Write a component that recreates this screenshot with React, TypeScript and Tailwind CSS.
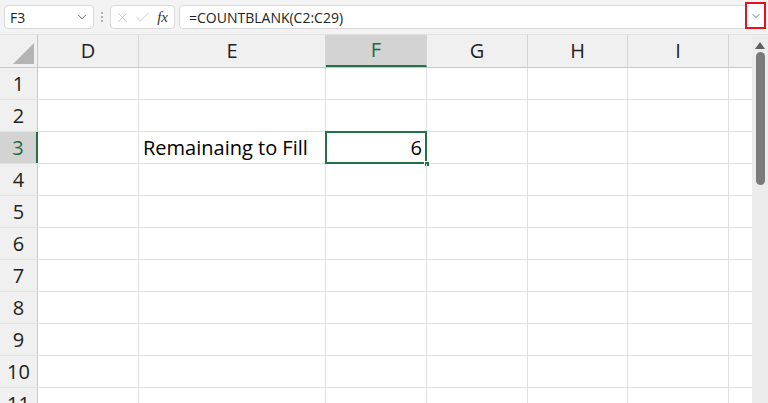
import { ChevronDown, X, Check } from "lucide-react"

const cols = [
    { name: "D", w: "w-[101px]" },
    { name: "E", w: "w-[187px]" },
    { name: "F", w: "w-[101px]" },
    { name: "G", w: "w-[101px]" },
    { name: "H", w: "w-[100px]" },
    { name: "I", w: "w-[101px]" },
]

const rows = [1, 2, 3, 4, 5, 6, 7, 8, 9, 10, 11]

const FormulaBar = () => {
    return (
        <div className="h-[35px] bg-[#f3f3f3] flex items-center pl-[4px] pr-[2px] gap-[4px] border-b border-[#e2e2e2]">
            <div className="w-[90px] h-[24px] bg-white border border-[#d9d9d9] rounded-[4px] flex items-center justify-between pl-[5px] pr-[4px]">
                <span className="text-[14px] text-[#222]">F3</span>
                <ChevronDown size={14} strokeWidth={1.6} className="text-[#555]" />
            </div>
            <div className="w-[8px] flex flex-col items-center gap-[2px]">
                <span className="w-[2px] h-[2px] bg-[#9a9a9a] rounded-full" />
                <span className="w-[2px] h-[2px] bg-[#9a9a9a] rounded-full" />
                <span className="w-[2px] h-[2px] bg-[#9a9a9a] rounded-full" />
            </div>
            <div className="w-[65px] h-[24px] bg-white border border-[#d9d9d9] rounded-[4px] flex items-center px-[3px] gap-[3px]">
                <X size={17} strokeWidth={1.2} className="text-[#c4c4c4]" />
                <Check size={17} strokeWidth={1.2} className="text-[#c4c4c4]" />
                <span className="ml-auto mr-[3px] text-[15px] italic text-[#333]" style={{ fontFamily: '"Liberation Serif", serif' }}>fx</span>
            </div>
            <div className="flex-1 h-[24px] bg-white border border-[#d9d9d9] rounded-[4px] flex items-center pl-[9px] relative">
                <span className="text-[14px] text-[#222]">=COUNTBLANK(C2:C29)</span>
                <div className="absolute right-[-1px] top-[-4px] w-[21px] h-[27px] border-2 border-[#e8101a] flex items-center justify-center bg-white">
                    <ChevronDown size={12} strokeWidth={1.6} className="text-[#555]" />
                </div>
            </div>
        </div>
    )
}

const App = () => {
    return (
        <div className="w-[768px] h-[403px] overflow-hidden flex flex-col bg-white" style={{ fontFamily: '"Open Sans", "Liberation Sans", sans-serif' }}>
            <FormulaBar />
            <div className="flex flex-1 min-h-0">
                <div className="w-[752px] flex flex-col">
                    {/* column headers */}
                    <div className="h-[33px] shrink-0 flex bg-[#f0f0f0] border-b border-[#c8c8c8]">
                        <div className="w-[38px] border-r border-[#c8c8c8] flex items-end justify-end pr-[3px] pb-[3px]">
                            <div className="w-0 h-0 border-l-[21px] border-l-transparent border-b-[21px] border-b-[#b4b4b4]" />
                        </div>
                        {cols.map((c) => (
                            <div
                                key={c.name}
                                className={`${c.w} flex items-center justify-center text-[20px] border-r border-[#d4d4d4] ${c.name === "F" ? "bg-[#d3d3d3] text-[#1d6b40] border-b-2 border-b-[#217346]" : "text-[#222]"}`}
                            >
                                {c.name}
                            </div>
                        ))}
                        <div className="flex-1" />
                    </div>
                    {rows.map((r) => (
                        <div key={r} className="h-[32px] flex shrink-0 border-b border-[#e1e1e1]">
                            <div
                                className={`w-[38px] flex items-center justify-center text-[20px] ${r === 3 ? "bg-[#d3d3d3] text-[#1d6b40] border-r-2 border-r-[#217346]" : "bg-[#f0f0f0] text-[#222] border-r border-[#c8c8c8]"}`}
                            >
                                {r}
                            </div>
                            {cols.map((c) => (
                                <div key={c.name} className={`${c.w} border-r border-[#e1e1e1] relative flex items-center text-[20px] text-black`}>
                                    {r === 3 && c.name === "E" && <span className="pl-[4px] whitespace-nowrap">Remainaing to Fill</span>}
                                    {r === 3 && c.name === "F" && (
                                        <>
                                            <span className="ml-auto pr-[4px] text-black">6</span>
                                            <div className="absolute left-[-1px] top-[-1px] right-[-1px] bottom-[-1px] border-2 border-[#217346]" />
                                            <div className="absolute right-[-4px] bottom-[-4px] w-[6px] h-[6px] bg-[#217346] border border-white" />
                                        </>
                                    )}
                                </div>
                            ))}
                            <div className="flex-1" />
                        </div>
                    ))}
                </div>
                {/* vertical scrollbar */}
                <div className="w-[16px] bg-[#ececec] flex flex-col items-center pt-[7px]">
                    <div className="w-0 h-0 border-l-[5px] border-l-transparent border-r-[5px] border-r-transparent border-b-[7px] border-b-[#5f5f5f]" />
                    <div className="mt-[3px] w-[9px] h-[133px] bg-[#7b7b7b] rounded-full" />
                </div>
            </div>
        </div>
    )
}

export default App
